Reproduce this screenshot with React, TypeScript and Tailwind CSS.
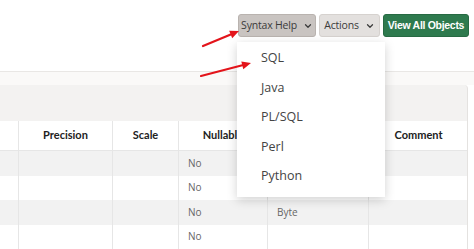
import { ChevronDown } from "lucide-react";

const items = ["SQL", "Java", "PL/SQL", "Perl", "Python"];

const rows = [
    { nullable: "No", extra: "", shade: true },
    { nullable: "No", extra: "", shade: false },
    { nullable: "No", extra: "Byte", shade: true },
    { nullable: "No", extra: "", shade: false },
];

function Arrow({ x1, y1, x2, y2 }: { x1: number; y1: number; x2: number; y2: number }) {
    const a = Math.atan2(y2 - y1, x2 - x1);
    const len = 9;
    const w = 4;
    const bx = x2 - len * Math.cos(a);
    const by = y2 - len * Math.sin(a);
    const px = -Math.sin(a) * w;
    const py = Math.cos(a) * w;
    return (
        <g>
            <line x1={x1} y1={y1} x2={bx} y2={by} stroke="#e3141b" strokeWidth="2.2" strokeLinecap="round" />
            <polygon points={`${x2},${y2} ${bx + px},${by + py} ${bx - px},${by - py}`} fill="#e3141b" />
        </g>
    );
}

export default function App() {
    return (
        <div className="relative w-[474px] h-[249px] overflow-hidden bg-white font-['Open_Sans',sans-serif]">
            {/* Toolbar */}
            <div className="h-[72px] border-b border-[#e9e7e5] flex justify-end items-start gap-[3px] pt-[14px] pr-[5px]">
                <button className="h-[23px] w-[78px] whitespace-nowrap rounded-[3px] bg-[#c9c4c1] border border-[#b9b3af] text-[10.5px] tracking-[-0.2px] text-[#3b3b3b] flex items-center justify-center gap-[6px]">
                    Syntax Help
                    <ChevronDown size={10} strokeWidth={3} />
                </button>
                <button className="h-[23px] w-[61px] whitespace-nowrap rounded-[3px] bg-[#e3e0de] border border-[#d6d2cf] text-[10.5px] tracking-[-0.2px] text-[#3b3b3b] flex items-center justify-center gap-[6px]">
                    Actions
                    <ChevronDown size={10} strokeWidth={3} />
                </button>
                <button className="h-[23px] w-[86px] whitespace-nowrap rounded-[3px] bg-[#2e7a4e] border border-[#276a43] text-[10.5px] font-bold text-white font-['Liberation_Sans',sans-serif] tracking-[-0.3px]">
                    View All Objects
                </button>
            </div>

            {/* Light band */}
            <div className="h-[13px] bg-[#faf9f8]" />

            {/* Panel */}
            <div className="w-[468px] rounded-tr-[4px] bg-[#f3f2f1] border-r border-[#e4e2e0]">
                <div className="h-[36px]" />
                <div className="bg-white">
                    <div className="grid grid-cols-[18px_94px_66px_89px_101px_100px] h-[30px] border-b border-[#e6e6e6] text-[11px] font-bold text-[#222] font-['Lato',sans-serif]">
                        <div />
                        <div className="border-l border-[#e6e6e6] flex items-center justify-center">Precision</div>
                        <div className="border-l border-[#e6e6e6] flex items-center justify-center">Scale</div>
                        <div className="border-l border-[#e6e6e6] flex items-center justify-center">Nullable</div>
                        <div className="border-l border-[#e6e6e6] flex items-center justify-center">Char Used</div>
                        <div className="border-l border-[#e6e6e6] flex items-center justify-center">Comment</div>
                    </div>
                    {rows.map((r, i) => (
                        <div
                            key={i}
                            className={
                                "grid grid-cols-[18px_94px_66px_89px_101px_100px] h-[24.5px] text-[10px] text-[#666] " +
                                (r.shade ? "bg-[#f2f2f2]" : "bg-white")
                            }
                        >
                            <div />
                            <div className="border-l border-[#e6e6e6]" />
                            <div className="border-l border-[#e6e6e6]" />
                            <div className="border-l border-[#e6e6e6] flex items-center pl-[9px]">{r.nullable}</div>
                            <div className="border-l border-[#e6e6e6] flex items-center pl-[9px]">{r.extra}</div>
                            <div className="border-l border-[#e6e6e6]" />
                        </div>
                    ))}
                </div>
            </div>

            {/* Dropdown menu */}
            <div className="absolute left-[237px] top-[42px] w-[148px] h-[155px] bg-white shadow-[0_3px_10px_rgba(0,0,0,0.18)] pt-[2px]">
                {items.map((it) => (
                    <div key={it} className="h-[29.5px] flex items-center pl-[24px] text-[12.5px] text-[#444]">
                        {it}
                    </div>
                ))}
            </div>

            {/* Annotation arrows */}
            <svg className="absolute inset-0 pointer-events-none" width="474" height="249">
                <Arrow x1={203} y1={46} x2={239} y2={31} />
                <Arrow x1={201} y1={76} x2={251} y2={63} />
            </svg>
        </div>
    );
}
